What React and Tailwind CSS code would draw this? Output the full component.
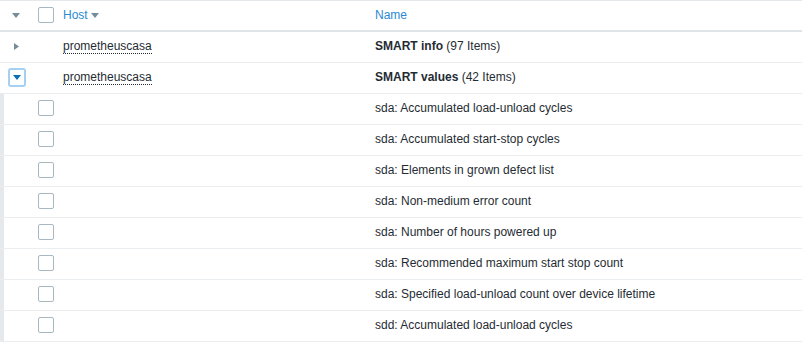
import React from "react";

const font = { fontFamily: '"Liberation Sans", Arial, sans-serif' };

function Checkbox() {
  return <div className="w-4 h-4 rounded-[2px] border border-[#a8b8c0] bg-white" />;
}

const items = [
  "sda: Accumulated load-unload cycles",
  "sda: Accumulated start-stop cycles",
  "sda: Elements in grown defect list",
  "sda: Non-medium error count",
  "sda: Number of hours powered up",
  "sda: Recommended maximum start stop count",
  "sda: Specified load-unload count over device lifetime",
  "sdd: Accumulated load-unload cycles",
];

export default function App() {
  return (
    <div className="w-[802px] h-[347px] bg-white overflow-hidden text-[12px] text-[#1f2c33]" style={font}>
      {/* header */}
      <div className="flex items-center h-[32px] pb-[2px] border-t border-t-[#e6e9eb] border-b-2 border-b-[#dfe4e7]">
        <div className="w-[38px] flex justify-center pr-[6px] pt-[2px]">
          <svg width="8" height="5" viewBox="0 0 8 5"><path d="M0 0H8L4 5Z" fill="#768d99" /></svg>
        </div>
        <div className="w-[25px] pt-[1px]"><Checkbox /></div>
        <div className="w-[312px] flex items-center text-[#2b8ad2]">
          Host
          <svg className="ml-[3px] mt-[1px]" width="8" height="5" viewBox="0 0 8 5"><path d="M0 0H8L4 5Z" fill="#768d99" /></svg>
        </div>
        <div className="text-[#2b8ad2]">Name</div>
      </div>
      {/* group row 1 */}
      <div className="flex items-center h-[31px] pb-[2px] border-b border-b-[#ebeef0]">
        <div className="w-[38px] flex justify-center pr-[5px]">
          <svg width="5" height="7" viewBox="0 0 5 7"><path d="M0 0V7L5 3.5Z" fill="#768d99" /></svg>
        </div>
        <div className="w-[25px]" />
        <div className="w-[312px]">
          <span className="border-b border-dotted border-b-[#1f2c33] leading-[13px] inline-block">prometheuscasa</span>
        </div>
        <div><span className="font-bold">SMART info</span> (97 Items)</div>
      </div>
      {/* group row 2 */}
      <div className="flex items-center h-[31px] pb-[2px] border-b border-b-[#ebeef0]">
        <div className="w-[38px] flex items-center pl-[8px] pt-[1px]">
          <div className="w-[18px] h-[19px] rounded-[3px] border-2 border-[#a6d0f3] flex items-center justify-center">
            <svg width="8" height="5" viewBox="0 0 8 5"><path d="M0 0H8L4 5Z" fill="#0a6fb8" /></svg>
          </div>
        </div>
        <div className="w-[25px]" />
        <div className="w-[312px]">
          <span className="border-b border-dotted border-b-[#1f2c33] leading-[13px] inline-block">prometheuscasa</span>
        </div>
        <div><span className="font-bold">SMART values</span> (42 Items)</div>
      </div>
      {items.map((t) => (
        <div key={t} className="flex h-[31px] border-b border-b-[#ebeef0]">
          <div className="w-[4px] bg-[#e5e9ec]" />
          <div className="flex items-center pb-[2px]">
            <div className="w-[34px]" />
            <div className="w-[25px] pb-[1px]"><Checkbox /></div>
            <div className="w-[312px]" />
            <div>{t}</div>
          </div>
        </div>
      ))}
    </div>
  );
}
